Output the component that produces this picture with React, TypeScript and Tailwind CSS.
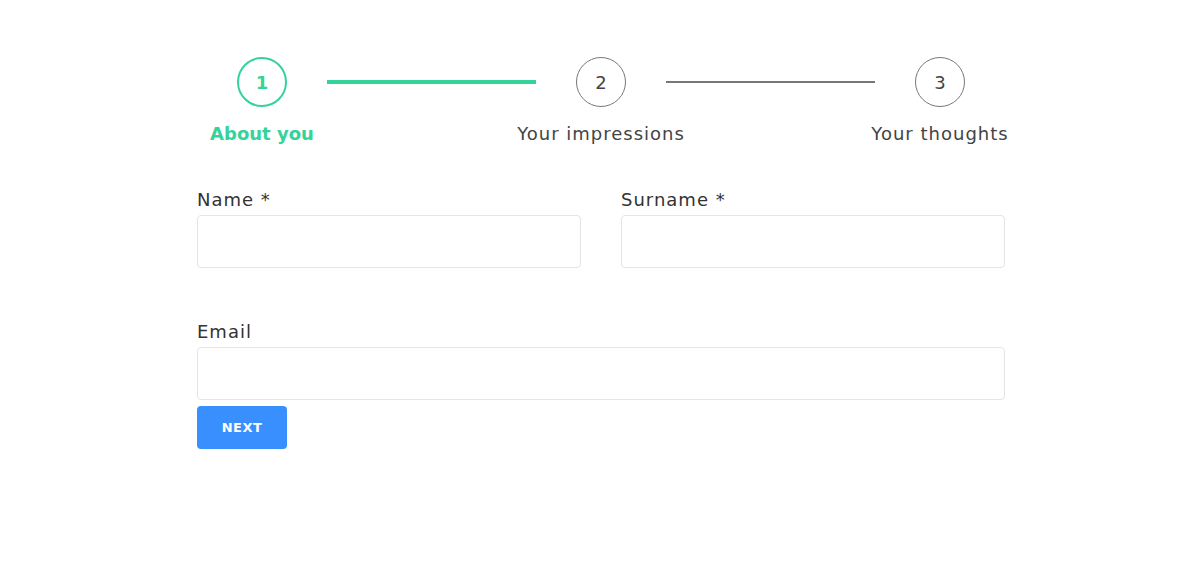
import React from "react";

const font = { fontFamily: '"DejaVu Sans", "Noto Sans", sans-serif' };

function Step({ n, label, active }: { n: number; label: string; active?: boolean }) {
  return (
    <div className="relative flex w-[130px] shrink-0 justify-center">
      <div
        className={
          active
            ? "flex h-[50px] w-[50px] items-center justify-center rounded-full border-2 border-[#34d399] text-[18px] font-bold text-[#34d399]"
            : "flex h-[50px] w-[50px] items-center justify-center rounded-full border border-[#777777] text-[18px] text-[#444444]"
        }
      >
        {n}
      </div>
      <div
        className={
          active
            ? "absolute left-1/2 top-[63px] -translate-x-1/2 whitespace-nowrap text-[18px] font-bold text-[#34d399]"
            : "absolute left-1/2 top-[63px] -translate-x-1/2 whitespace-nowrap text-[18px] tracking-[1px] text-[#444444]"
        }
      >
        {label}
      </div>
    </div>
  );
}

export default function App() {
  return (
    <div className="min-h-[562px] w-full bg-white" style={font}>
      <div className="ml-[197px] w-[808px] pt-[57px]">
        <div className="flex items-center">
          <Step n={1} label="About you" active />
          <div className="h-[4px] flex-1 bg-[#34d399]" />
          <Step n={2} label="Your impressions" />
          <div className="h-[2px] flex-1 bg-[#777777]" />
          <Step n={3} label="Your thoughts" />
        </div>
        <div className="mt-[79px] grid grid-cols-2 gap-x-[40px]">
          <div>
            <label className="block text-[18px] leading-[27px] tracking-[1px] text-[#333333]">Name *</label>
            <input className="mt-[2px] block h-[53px] w-full rounded-[4px] border border-[#e5e5e5] outline-none" />
          </div>
          <div>
            <label className="block text-[18px] leading-[27px] tracking-[1px] text-[#333333]">Surname *</label>
            <input className="mt-[2px] block h-[53px] w-full rounded-[4px] border border-[#e5e5e5] outline-none" />
          </div>
        </div>
        <div className="mt-[50px]">
          <label className="block text-[18px] leading-[27px] tracking-[1px] text-[#333333]">Email</label>
          <input className="mt-[2px] block h-[53px] w-full rounded-[4px] border border-[#e5e5e5] outline-none" />
        </div>
        <button className="mt-[6px] flex h-[43px] w-[90px] items-center justify-center rounded-[4px] bg-[#3a8ffe] text-[13px] font-bold tracking-[0.5px] text-white">
          NEXT
        </button>
      </div>
    </div>
  );
}
